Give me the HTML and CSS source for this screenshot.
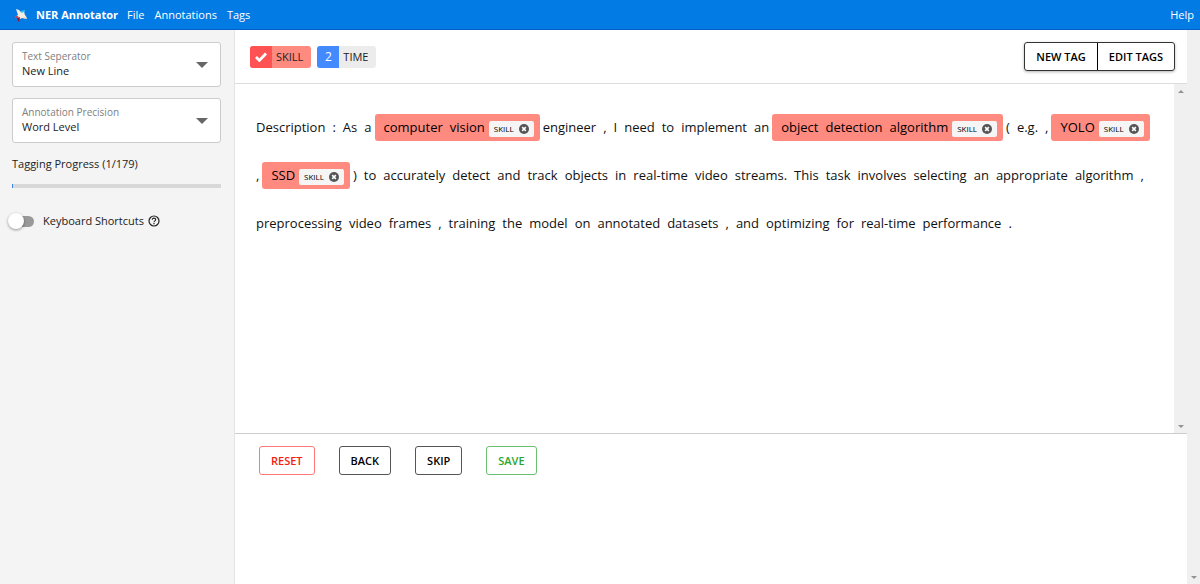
FILE: index.html
```
<!DOCTYPE html>
<html lang="en">
<head>
    <meta charset="UTF-8">
    <meta name="viewport" content="width=device-width, initial-scale=1.0">
    <title>NER Annotator</title>
    <link rel="stylesheet" href="styles.css">
</head>
<body>
    <svg class="sprite" aria-hidden="true">
        <symbol id="close" viewBox="0 0 20 20">
            <circle cx="10" cy="10" r="10" fill="#555"/>
            <path d="M6.3 6.3l7.4 7.4M13.7 6.3l-7.4 7.4" stroke="#fff" stroke-width="3"/>
        </symbol>
        <symbol id="caret" viewBox="0 0 12 6">
            <path d="M0 0h12L6 6z" fill="#666"/>
        </symbol>
        <symbol id="arrow-up" viewBox="0 0 6 3">
            <path d="M0 3h6L3 0z" fill="#929292"/>
        </symbol>
        <symbol id="arrow-down" viewBox="0 0 6 3">
            <path d="M0 0h6L3 3z" fill="#929292"/>
        </symbol>
    </svg>

    <header class="menu-bar">
        <svg class="logo" viewBox="0 0 14 14" aria-hidden="true">
            <path d="M7 3l4-1-1 4-2 1z" fill="#3fc4ea"/>
            <path d="M2 1l3 1 3 3 2-1 1 3 2 3-1 1-4-1-2 1-3-1-2-1 3-2z" fill="#f4ede4"/>
            <path d="M0 9l3-1 2 1-2 1z" fill="#b3273c"/>
            <path d="M3 10l3-1-1 5-1-1z" fill="#8d1733"/>
            <path d="M9 9l4 1-1 1z" fill="#edc58c"/>
        </svg>
        <strong class="brand">NER Annotator</strong>
        <nav class="menu">
            <a href="#">File</a>
            <a href="#">Annotations</a>
            <a href="#">Tags</a>
        </nav>
        <a class="help" href="#">Help</a>
    </header>

    <div class="layout">
        <aside class="sidebar">
            <div class="field">
                <label for="separator">Text Seperator</label>
                <select id="separator">
                    <option>New Line</option>
                    <option>Empty Line</option>
                </select>
                <svg class="caret" aria-hidden="true"><use href="#caret"/></svg>
            </div>
            <div class="field">
                <label for="precision">Annotation Precision</label>
                <select id="precision">
                    <option>Word Level</option>
                    <option>Character Level</option>
                </select>
                <svg class="caret" aria-hidden="true"><use href="#caret"/></svg>
            </div>

            <label class="progress-label" for="progress">Tagging Progress (1/179)</label>
            <progress id="progress" value="1" max="179"></progress>

            <label class="toggle">
                <input type="checkbox">
                <span>Keyboard Shortcuts</span>
                <svg class="help-icon" viewBox="0 0 12 12" aria-hidden="true">
                    <circle cx="6" cy="6" r="5" fill="none" stroke="#222" stroke-width="1.2"/>
                    <path d="M4.3 4.8c0-2.3 3.4-2.1 3.4-.1 0 1.2-1.7 1.3-1.7 2.6" fill="none" stroke="#222" stroke-width="1.1"/>
                    <path d="M5.4 8h1.2v1.2H5.4z" fill="#222"/>
                </svg>
            </label>
        </aside>

        <main class="main">
            <div class="tag-bar">
                <button type="button" class="tag tag-active">
                    <span class="tag-key">
                        <svg class="check" viewBox="0 0 12 10" aria-hidden="true"><path d="M1 5l3.4 3.4L11 1.6" fill="none" stroke="#fff" stroke-width="2.8"/></svg>
                    </span>
                    <span class="tag-name">SKILL</span>
                </button>
                <button type="button" class="tag">
                    <span class="tag-key">2</span>
                    <span class="tag-name">TIME</span>
                </button>
                <div class="tag-actions">
                    <button type="button">NEW TAG</button>
                    <button type="button">EDIT TAGS</button>
                </div>
            </div>

            <div class="editor">
                <div class="tokens">
                    <span>Description</span> <span>:</span> <span>As</span> <span>a</span>
                    <mark class="entity">
                        <span>computer</span> <span>vision</span>
                        <button type="button" class="entity-tag">SKILL <svg aria-hidden="true"><use href="#close"/></svg></button>
                    </mark>
                    <span>engineer</span> <span>,</span> <span>I</span> <span>need</span> <span>to</span> <span>implement</span> <span>an</span>
                    <mark class="entity">
                        <span>object</span> <span>detection</span> <span>algorithm</span>
                        <button type="button" class="entity-tag">SKILL <svg aria-hidden="true"><use href="#close"/></svg></button>
                    </mark>
                    <span>(</span> <span>e.g.</span> <span>,</span>
                    <mark class="entity">
                        <span>YOLO</span>
                        <button type="button" class="entity-tag">SKILL <svg aria-hidden="true"><use href="#close"/></svg></button>
                    </mark>
                    <span>,</span>
                    <mark class="entity">
                        <span>SSD</span>
                        <button type="button" class="entity-tag">SKILL <svg aria-hidden="true"><use href="#close"/></svg></button>
                    </mark>
                    <span>)</span> <span>to</span> <span>accurately</span> <span>detect</span> <span>and</span> <span>track</span> <span>objects</span> <span>in</span> <span>real-time</span> <span>video</span> <span>streams.</span> <span>This</span> <span>task</span> <span>involves</span> <span>selecting</span> <span>an</span> <span>appropriate</span> <span>algorithm</span> <span>,</span>
                    <span>preprocessing</span> <span>video</span> <span>frames</span> <span>,</span> <span>training</span> <span>the</span> <span>model</span> <span>on</span> <span>annotated</span> <span>datasets</span> <span>,</span> <span>and</span> <span>optimizing</span> <span>for</span> <span>real-time</span> <span>performance</span> <span>.</span>
                </div>
                <div class="scroll-track">
                    <svg aria-hidden="true"><use href="#arrow-up"/></svg>
                    <svg aria-hidden="true"><use href="#arrow-down"/></svg>
                </div>
            </div>

            <div class="actions">
                <button type="button" class="btn btn-red">RESET</button>
                <button type="button" class="btn">BACK</button>
                <button type="button" class="btn">SKIP</button>
                <button type="button" class="btn btn-green">SAVE</button>
            </div>
        </main>

        <div class="scroll-track page-track">
            <svg aria-hidden="true"><use href="#arrow-down"/></svg>
        </div>
    </div>
</body>
</html>
```
FILE: styles.css
```
* {
    box-sizing: border-box;
}
body {
    margin: 0;
    min-height: 100vh;
    display: flex;
    flex-direction: column;
    font-family: "Segoe UI", "Open Sans", "Noto Sans", sans-serif;
    font-size: 11px;
    color: #222;
    background: #fff;
}
button, select {
    font-family: inherit;
    font-size: inherit;
    color: inherit;
}
button {
    cursor: pointer;
}
.sprite {
    display: none;
}

/* menu bar */
.menu-bar {
    display: flex;
    align-items: center;
    height: 30px;
    padding: 0 6px 0 14px;
    background: #037be5;
    border-bottom: 1px solid #0560c8;
    color: #fff;
}
.menu-bar a {
    color: #fff;
    text-decoration: none;
}
.logo {
    width: 14px;
    height: 14px;
    margin-right: 8px;
}
.menu {
    display: flex;
    gap: 10px;
    margin-left: 9px;
}
.help {
    margin-left: auto;
}

.layout {
    flex: 1;
    display: grid;
    grid-template-columns: 235px 1fr 13px;
}

/* sidebar */
.sidebar {
    padding: 12px 13px 12px 12px;
    background: #f4f4f4;
    border-right: 1px solid #e4e4e4;
}
.field {
    position: relative;
    height: 45px;
    margin-bottom: 11px;
    padding-top: 7px;
    background: #fff;
    border: 1px solid #ccc;
    border-radius: 3px;
}
.field label {
    display: block;
    padding-left: 9px;
    font-size: 10px;
    line-height: 13px;
    color: #808080;
}
.field select {
    display: block;
    width: 100%;
    padding: 0 9px;
    border: 0;
    line-height: 15px;
    background: none;
    appearance: none;
}
.caret {
    position: absolute;
    right: 12px;
    top: 19px;
    width: 12px;
    height: 6px;
    pointer-events: none;
}
.progress-label {
    display: block;
    margin-top: 13px;
    line-height: 16px;
}
progress {
    display: block;
    width: 100%;
    height: 4px;
    margin-top: 12px;
    border: 0;
    background: #d8d8d8;
    appearance: none;
}
progress::-webkit-progress-bar {
    background: #d8d8d8;
}
progress::-webkit-progress-value {
    background: #3f83e8;
}
.toggle {
    display: flex;
    align-items: center;
    margin-top: 24px;
    line-height: 18px;
}
.toggle input {
    display: flex;
    align-items: center;
    width: 22px;
    height: 11px;
    margin: 0 9px 0 0;
    border-radius: 6px;
    background: #999;
    appearance: none;
}
.toggle input::before {
    content: "";
    width: 16px;
    height: 16px;
    flex: none;
    margin-left: -4px;
    border-radius: 50%;
    background: #fff;
    box-shadow: 0 1px 3px rgba(0,0,0,0.4);
}
.toggle input:checked::before {
    margin-left: 10px;
}
.help-icon {
    width: 12px;
    height: 12px;
    margin-left: 4px;
}

/* tag selection */
.main {
    min-width: 0;
}
.tag-bar {
    display: flex;
    align-items: center;
    gap: 6px;
    height: 54px;
    padding: 0 12px 0 15px;
    border-bottom: 1px solid #ddd;
}
.tag {
    display: flex;
    height: 22px;
    padding: 0;
    border: 0;
    border-radius: 3px;
    overflow: hidden;
    line-height: 22px;
    background: #ececec;
}
.tag-key {
    display: flex;
    align-items: center;
    justify-content: center;
    width: 22px;
    height: 22px;
    font-size: 12px;
    color: #fff;
    background: #448aff;
}
.tag-name {
    padding: 0 8px 0 4px;
}
.tag-active {
    background: #ff8a80;
}
.tag-active .tag-key {
    background: #ff5252;
}
.check {
    width: 12px;
    height: 10px;
}
.tag-actions {
    display: flex;
    margin-left: auto;
    border: 1px solid #333;
    border-radius: 3px;
    box-shadow: 0 1px 3px rgba(0,0,0,0.3);
}
.tag-actions button {
    height: 27px;
    padding: 0 11px;
    border: 0;
    font-weight: 600;
    font-size: 11px;
    color: #000;
    background: none;
}
.tag-actions button + button {
    border-left: 1px solid #000;
}

/* annotated text */
.editor {
    display: flex;
    height: 60vh;
    border-bottom: 1px solid #ccc;
}
.tokens {
    flex: 1;
    display: flex;
    flex-wrap: wrap;
    align-content: flex-start;
    column-gap: 1px;
    padding: 19px 18px 0 18px;
    font-size: 13px;
    line-height: 48px;
    color: #111;
}
.tokens span {
    padding: 0 3px;
}
.entity {
    display: flex;
    align-items: center;
    align-self: center;
    gap: 1px;
    height: 27px;
    margin: 0 -1px;
    padding: 0 6px;
    border-radius: 3px;
    line-height: 27px;
    background: #ff8a80;
}
.entity-tag {
    display: flex;
    align-items: center;
    gap: 5px;
    height: 16px;
    margin-top: 3px;
    padding: 0 5px;
    border: 0;
    border-radius: 2px;
    font-size: 8px;
    background: #f5f5f5;
}
.entity-tag svg {
    width: 10px;
    height: 10px;
}
.scroll-track {
    display: flex;
    flex-direction: column;
    align-items: center;
    justify-content: space-between;
    width: 13px;
    padding: 6px 0 5px;
    background: #f0f0f0;
}
.scroll-track svg {
    width: 6px;
    height: 3px;
}
.page-track {
    justify-content: flex-end;
}

/* bottom buttons */
.actions {
    display: flex;
    gap: 24px;
    padding: 12px 24px;
}
.btn {
    height: 29px;
    padding: 0 11px;
    border: 1px solid #555;
    border-radius: 3px;
    font-weight: 600;
    font-size: 11px;
    color: #000;
    background: #fff;
}
.btn-red {
    border-color: #f77;
    color: #f32013;
}
.btn-green {
    border-color: #6bbf6f;
    color: #2ba52f;
}
```
